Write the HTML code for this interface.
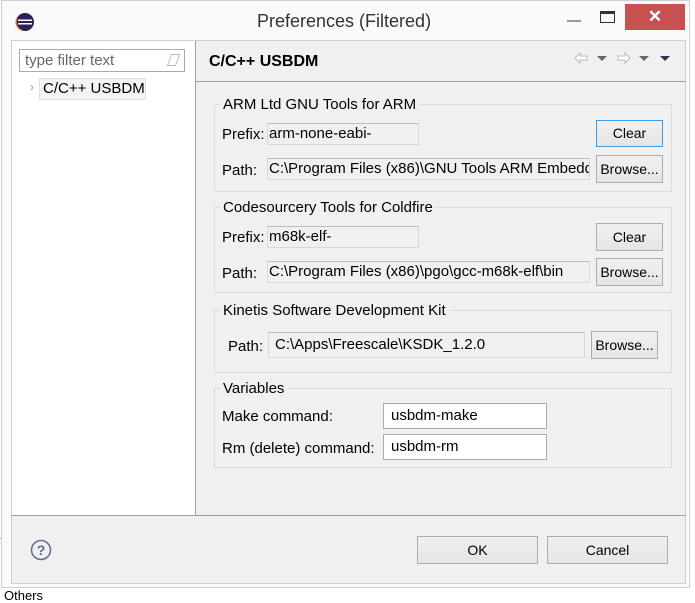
<!DOCTYPE html>
<html><head><style>
*{margin:0;padding:0;box-sizing:border-box}
body{width:695px;height:594px;position:relative;background:#fff;font-family:"Liberation Sans",sans-serif;font-size:15px;color:#000;overflow:hidden}
.a{position:absolute}
.win{left:1px;top:0;width:689px;height:588px;background:#fafafa;border:1px solid #d0d0d0}
.grp{position:absolute;border:1px solid #dcdcdc}
.gt{position:absolute;background:#f0f0f0;padding:0 3px;font-size:15px;line-height:16px}
.fld{position:absolute;border:1px solid #d8d8d8;border-top-color:#bdbdbd;background:#f0f0f0;font-size:15px;line-height:20px;padding-left:1px;white-space:nowrap;overflow:hidden}
.fw{background:#fff;border:1px solid #acacac;padding-left:7px;line-height:23px}
.btn{position:absolute;border:1px solid #adadad;background:linear-gradient(#f0f0f0,#e5e5e5);text-align:center;font-size:14px;white-space:nowrap;overflow:hidden}
.lbl{position:absolute;font-size:15px;line-height:16px}
</style></head><body>
<div class="a" style="left:0;top:538px;width:12px;height:1px;background:#b0b0b0"></div>
<div class="a" style="left:4px;top:588px;font-size:13px">Others</div>
<div class="a win"></div>
<svg class="a" style="left:15px;top:12px" width="20" height="20" viewBox="0 0 20 20"><circle cx="10" cy="10" r="9" fill="#2c2255"/><circle cx="10" cy="10" r="9" fill="none" stroke="#f7941e" stroke-width="1.2" stroke-dasharray="14 40" transform="rotate(120 10 10)"/><rect x="3" y="7.5" width="14" height="1.5" fill="#fff"/><rect x="3" y="11" width="14" height="1.5" fill="#fff"/></svg>
<div class="a" style="left:257px;top:11px;font-size:18px;color:#333">Preferences (Filtered)</div>
<div class="a" style="left:567px;top:20px;width:14px;height:2px;background:#999"></div>
<div class="a" style="left:600px;top:11px;width:15px;height:12px;border:1px solid #333;border-top-width:3px"></div>
<div class="a" style="left:625px;top:4px;width:60px;height:26px;background:#c75050;color:#fff;text-align:center;font-size:17px;font-weight:bold;line-height:26px">✕</div>
<div class="a" style="left:11px;top:40px;width:675px;height:544px;background:#f0f0f0;border:1px solid #d0d0d0"></div>
<div class="a" style="left:12px;top:41px;width:184px;height:475px;background:#fff;border-right:1px solid #a0a0a0"></div>
<div class="a" style="left:11px;top:515px;width:675px;height:1px;background:#a0a0a0"></div>
<div class="a" style="left:19px;top:49px;width:166px;height:23px;border:1px solid #aaa;background:#fff;color:#666;padding-left:5px;line-height:21px">type filter text</div>
<div class="a" style="left:169px;top:54px;width:9px;height:12px;border:1px solid #bbb;transform:skewX(-20deg)"></div>
<div class="a" style="left:30px;top:80px;color:#999;font-size:12px">›</div>
<div class="a" style="left:39px;top:78px;width:107px;height:22px;background:#f4f4f4;border:1px solid #e0e0e0;line-height:20px;padding-left:3px">C/C++ USBDM</div>
<div class="a" style="left:209px;top:53px;font-weight:bold;font-size:16px">C/C++ USBDM</div>
<div class="a" style="left:196px;top:81px;width:490px;height:1px;background:#a0a0a0"></div>
<svg class="a" style="left:573px;top:50px" width="100" height="16" viewBox="0 0 100 16"><path d="M2 8 L7 3 V6 H14 V10 H7 V13 Z" fill="#fff" stroke="#bbb"/><path d="M24 6 h10 l-5 5z" fill="#666"/><path d="M57 8 L52 3 V6 H45 V10 H52 V13 Z" fill="#fff" stroke="#bbb"/><path d="M66 6 h10 l-5 5z" fill="#666"/><path d="M87 6 h10 l-5 5z" fill="#3a2a55"/></svg>
<div class="grp" style="left:214px;top:104px;width:458px;height:88px"></div>
<div class="gt" style="left:220px;top:97px">ARM Ltd GNU Tools for ARM</div>
<div class="lbl" style="left:222px;top:127px">Prefix:</div>
<div class="fld" style="left:267px;top:123px;width:152px;height:22px">arm-none-eabi-</div>
<div class="btn" style="left:596px;top:120px;width:67px;height:27px;line-height:25px;border-color:#3c9ee8">Clear</div>
<div class="lbl" style="left:222px;top:163px">Path:</div>
<div class="fld" style="left:267px;top:158px;width:323px;height:22px">C:\Program Files (x86)\GNU Tools ARM Embedded</div>
<div class="btn" style="left:596px;top:155px;width:67px;height:28px;line-height:26px">Browse...</div>
<div class="grp" style="left:214px;top:207px;width:458px;height:86px"></div>
<div class="gt" style="left:220px;top:200px">Codesourcery Tools for Coldfire</div>
<div class="lbl" style="left:222px;top:230px">Prefix:</div>
<div class="fld" style="left:267px;top:226px;width:152px;height:22px">m68k-elf-</div>
<div class="btn" style="left:596px;top:223px;width:67px;height:28px;line-height:26px">Clear</div>
<div class="lbl" style="left:222px;top:266px">Path:</div>
<div class="fld" style="left:267px;top:261px;width:323px;height:22px">C:\Program Files (x86)\pgo\gcc-m68k-elf\bin</div>
<div class="btn" style="left:596px;top:258px;width:67px;height:28px;line-height:26px">Browse...</div>
<div class="grp" style="left:214px;top:310px;width:458px;height:63px"></div>
<div class="gt" style="left:220px;top:303px">Kinetis Software Development Kit</div>
<div class="lbl" style="left:228px;top:339px">Path:</div>
<div class="fld" style="left:268px;top:332px;width:317px;height:26px;line-height:24px;padding-left:6px">C:\Apps\Freescale\KSDK_1.2.0</div>
<div class="btn" style="left:591px;top:331px;width:67px;height:28px;line-height:26px">Browse...</div>
<div class="grp" style="left:214px;top:388px;width:458px;height:80px"></div>
<div class="gt" style="left:220px;top:381px">Variables</div>
<div class="lbl" style="left:222px;top:409px">Make command:</div>
<div class="fld fw" style="left:383px;top:403px;width:164px;height:26px">usbdm-make</div>
<div class="lbl" style="left:222px;top:441px">Rm (delete) command:</div>
<div class="fld fw" style="left:383px;top:434px;width:164px;height:26px">usbdm-rm</div>
<svg class="a" style="left:30px;top:539px" width="22" height="22" viewBox="0 0 22 22"><circle cx="11" cy="11" r="9.5" fill="none" stroke="#5a6d8c" stroke-width="1.5"/><text x="11" y="16" font-size="14" font-weight="bold" text-anchor="middle" fill="#5a6d8c" font-family="Liberation Sans">?</text></svg>
<div class="btn" style="left:417px;top:536px;width:121px;height:28px;line-height:26px">OK</div>
<div class="btn" style="left:547px;top:536px;width:121px;height:28px;line-height:26px">Cancel</div>
</body></html>
